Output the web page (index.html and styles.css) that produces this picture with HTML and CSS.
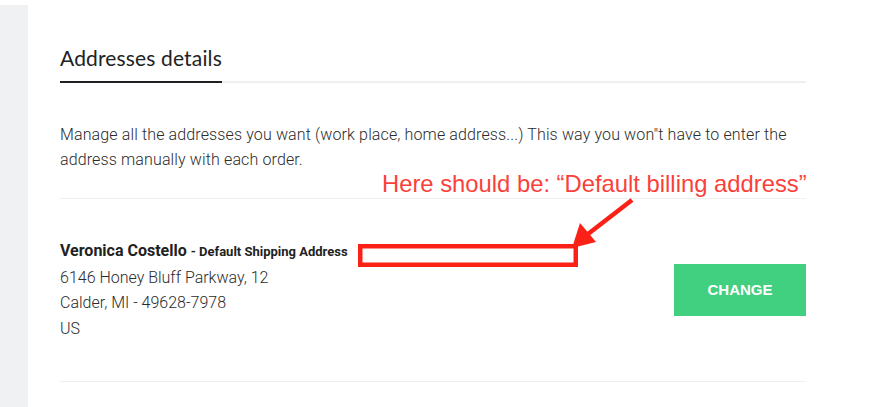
FILE: index.html
```html
<!DOCTYPE html>
<html lang="en">
<head>
<meta charset="utf-8">
<title>Addresses details</title>
<link rel="stylesheet" href="styles.css">
</head>
<body>
<div class="page">
  <aside class="sidebar"></aside>
  <main class="content">
    <div class="tabs">
      <h2 class="tab-title">Addresses details</h2>
    </div>
    <p class="intro">Manage all the addresses you want (work place, home address...) This way you won"t have to enter the address manually with each order.</p>
    <div class="address-row">
      <div class="address">
        <div class="address-name"><strong>Veronica Costello</strong> <span class="address-tag">- Default Shipping Address</span></div>
        <div>6146 Honey Bluff Parkway, 12</div>
        <div>Calder, MI - 49628-7978</div>
        <div>US</div>
      </div>
      <button class="btn-change" type="button">CHANGE</button>
    </div>
  </main>
  <div class="annotation">
    <div class="annotation-text">Here should be: “Default billing address”</div>
    <svg class="annotation-marks" width="873" height="407" viewBox="0 0 873 407">
      <rect x="360.25" y="246.25" width="215.5" height="18.5" fill="none" stroke="#fb2116" stroke-width="4.5"/>
      <line x1="632" y1="200" x2="588" y2="234" stroke="#fb2116" stroke-width="4.5"/>
      <polygon points="572,248 580,223 596,242" fill="#fb2116"/>
    </svg>
  </div>
</div>
</body>
</html>
```
FILE: styles.css
```css
html, body {
  margin: 0;
  padding: 0;
  background: #ffffff;
}

.page {
  position: relative;
  display: flex;
  width: 873px;
  height: 407px;
  overflow: hidden;
}

.sidebar {
  width: 28px;
  margin-top: 5px;
  background: #f0f1f3;
  flex: none;
}

.content {
  width: 746px;
  padding-left: 32px;
  font-family: Roboto, "Liberation Sans", sans-serif;
  color: #2b2b2b;
}

.tabs {
  margin-top: 45px;
  border-bottom: 2px solid #f0f0f0;
  display: flex;
}

.tab-title {
  margin: 0 0 -2px 0;
  padding-bottom: 11px;
  font-family: Lato, "Open Sans", sans-serif;
  font-weight: 400;
  font-size: 21px;
  letter-spacing: 0.15px;
  line-height: 25px;
  color: #222222;
  border-bottom: 2px solid #1f1f24;
}

.intro {
  margin: 40px 0 0 0;
  padding-bottom: 26px;
  font-size: 16px;
  line-height: 24.5px;
  font-weight: 300;
  letter-spacing: 0.13px;
  color: #2b2b2b;
  border-bottom: 1px solid #efefef;
}

.address-row {
  display: flex;
  align-items: center;
  justify-content: space-between;
  padding: 39px 0 40px 0;
  border-bottom: 1px solid #efefef;
}

.address {
  font-size: 16px;
  line-height: 25.5px;
  font-weight: 300;
  color: #2b2b2b;
}

.address-name strong {
  font-weight: 700;
  color: #222222;
}

.address-tag {
  font-size: 13px;
  font-weight: 700;
  color: #222222;
}

.btn-change {
  width: 132px;
  height: 52px;
  border: none;
  background: #41cf80;
  color: #ffffff;
  font-family: "Liberation Sans", Arial, sans-serif;
  font-weight: 700;
  font-size: 15px;
  padding: 0;
  margin-top: 0;
}

.annotation {
  position: absolute;
  left: 0;
  top: 0;
  width: 873px;
  height: 407px;
  pointer-events: none;
}

.annotation-text {
  position: absolute;
  left: 382px;
  top: 170px;
  font-family: "Liberation Sans", Arial, sans-serif;
  font-size: 23.8px;
  line-height: 27px;
  color: #fc3f3a;
  white-space: nowrap;
}

.annotation-marks {
  position: absolute;
  left: 0;
  top: 0;
}
```
